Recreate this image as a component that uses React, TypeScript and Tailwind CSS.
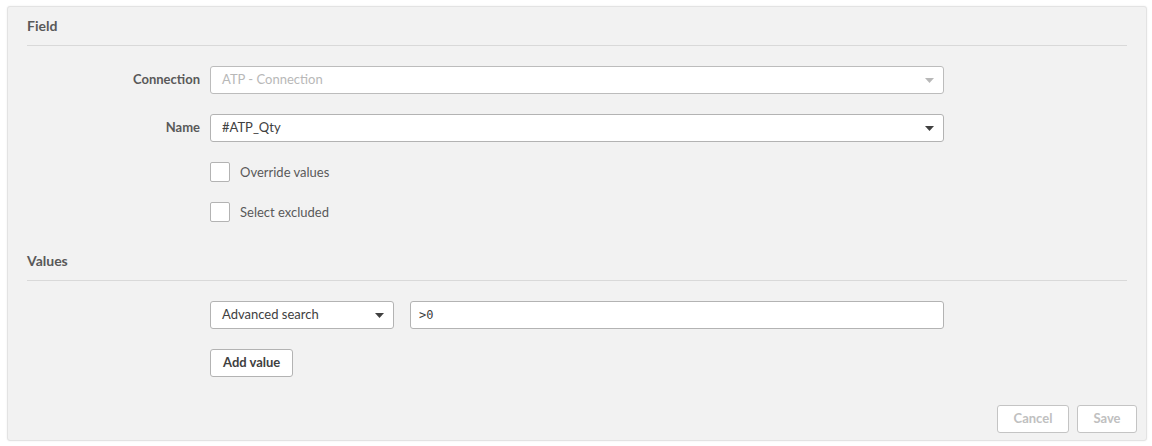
import React from "react";

const font = { fontFamily: "Lato, 'Open Sans', sans-serif" };

const Caret = ({ muted }: { muted?: boolean }) => (
  <svg width="9" height="5" viewBox="0 0 9 5" className="shrink-0">
    <path d="M0 0 L9 0 L4.5 5 Z" fill={muted ? "#b8b8b8" : "#404040"} />
  </svg>
);

const Row = ({ label, children }: { label?: string; children: React.ReactNode }) => (
  <div className="flex items-center">
    <div className="w-[183px] pr-[10px] text-right text-[13px] font-bold text-[#595959]">{label}</div>
    <div className="flex-1">{children}</div>
  </div>
);

const Checkbox = ({ label }: { label: string }) => (
  <label className="flex h-[20px] items-center gap-[10px]">
    <span className="h-[20px] w-[20px] rounded-[2px] border border-[#b3b3b3] bg-white" />
    <span className="translate-y-[1px] text-[13px] text-[#595959]">{label}</span>
  </label>
);

export default function App() {
  return (
    <div className="min-h-[446px] bg-white pt-[6px] pl-[7px] pr-[5px]" style={font}>
      <div className="flex h-[435px] flex-col rounded-[3px] border border-[#e3e3e3] bg-[#f2f2f2] px-[19px] shadow-[0_0_2px_rgba(0,0,0,0.08)]">
        <div className="flex h-[39px] items-center border-b border-[#d9d9d9]">
          <h2 className="pb-[2px] text-[14px] font-bold text-[#595959]">Field</h2>
        </div>
        <div className="flex flex-col pt-[20px]">
          <Row label="Connection">
            <div className="flex h-[28px] w-[734px] items-center justify-between rounded-[3px] border border-[#bcbcbc] bg-white pl-[11px] pr-[9px]">
              <span className="text-[13px] text-[#b8b8b8]">ATP - Connection</span>
              <Caret muted />
            </div>
          </Row>
          <div className="h-[20px]" />
          <Row label="Name">
            <div className="flex h-[28px] w-[734px] items-center justify-between rounded-[3px] border border-[#b3b3b3] bg-white pl-[11px] pr-[9px]">
              <span className="text-[13px] text-[#404040]">#ATP_Qty</span>
              <Caret />
            </div>
          </Row>
          <div className="h-[20px]" />
          <Row>
            <Checkbox label="Override values" />
          </Row>
          <div className="h-[20px]" />
          <Row>
            <Checkbox label="Select excluded" />
          </Row>
        </div>
        <div className="mt-[20px] flex h-[39px] items-center border-b border-[#d9d9d9]">
          <h2 className="pb-[1px] text-[14px] font-bold text-[#595959]">Values</h2>
        </div>
        <div className="flex flex-col pt-[20px]">
          <Row>
            <div className="flex items-center gap-[16px]">
              <div className="flex h-[28px] w-[184px] items-center justify-between rounded-[3px] border border-[#b3b3b3] bg-white pl-[11px] pr-[9px]">
                <span className="text-[13px] text-[#404040]">Advanced search</span>
                <Caret />
              </div>
              <div className="flex h-[28px] w-[534px] items-center rounded-[3px] border border-[#b3b3b3] bg-white px-[8px]">
                <span className="text-[12px] text-[#404040]" style={{ fontFamily: "'DejaVu Sans Mono', monospace" }}>
                  &gt;0
                </span>
              </div>
            </div>
          </Row>
          <div className="h-[20px]" />
          <Row>
            <button className="h-[28px] rounded-[3px] border border-[#b3b3b3] bg-white px-[12px] text-[13px] font-bold text-[#404040]">
              Add value
            </button>
          </Row>
        </div>
        <div className="-mr-[10px] mt-auto flex justify-end gap-[8px] pb-[7px]">
          <button className="h-[28px] w-[72px] rounded-[3px] border border-[#c4c4c4] bg-white text-[13px] font-bold text-[#c0c0c0]">
            Cancel
          </button>
          <button className="h-[28px] w-[60px] rounded-[3px] border border-[#c4c4c4] bg-white text-[13px] font-bold text-[#c0c0c0]">
            Save
          </button>
        </div>
      </div>
    </div>
  );
}
